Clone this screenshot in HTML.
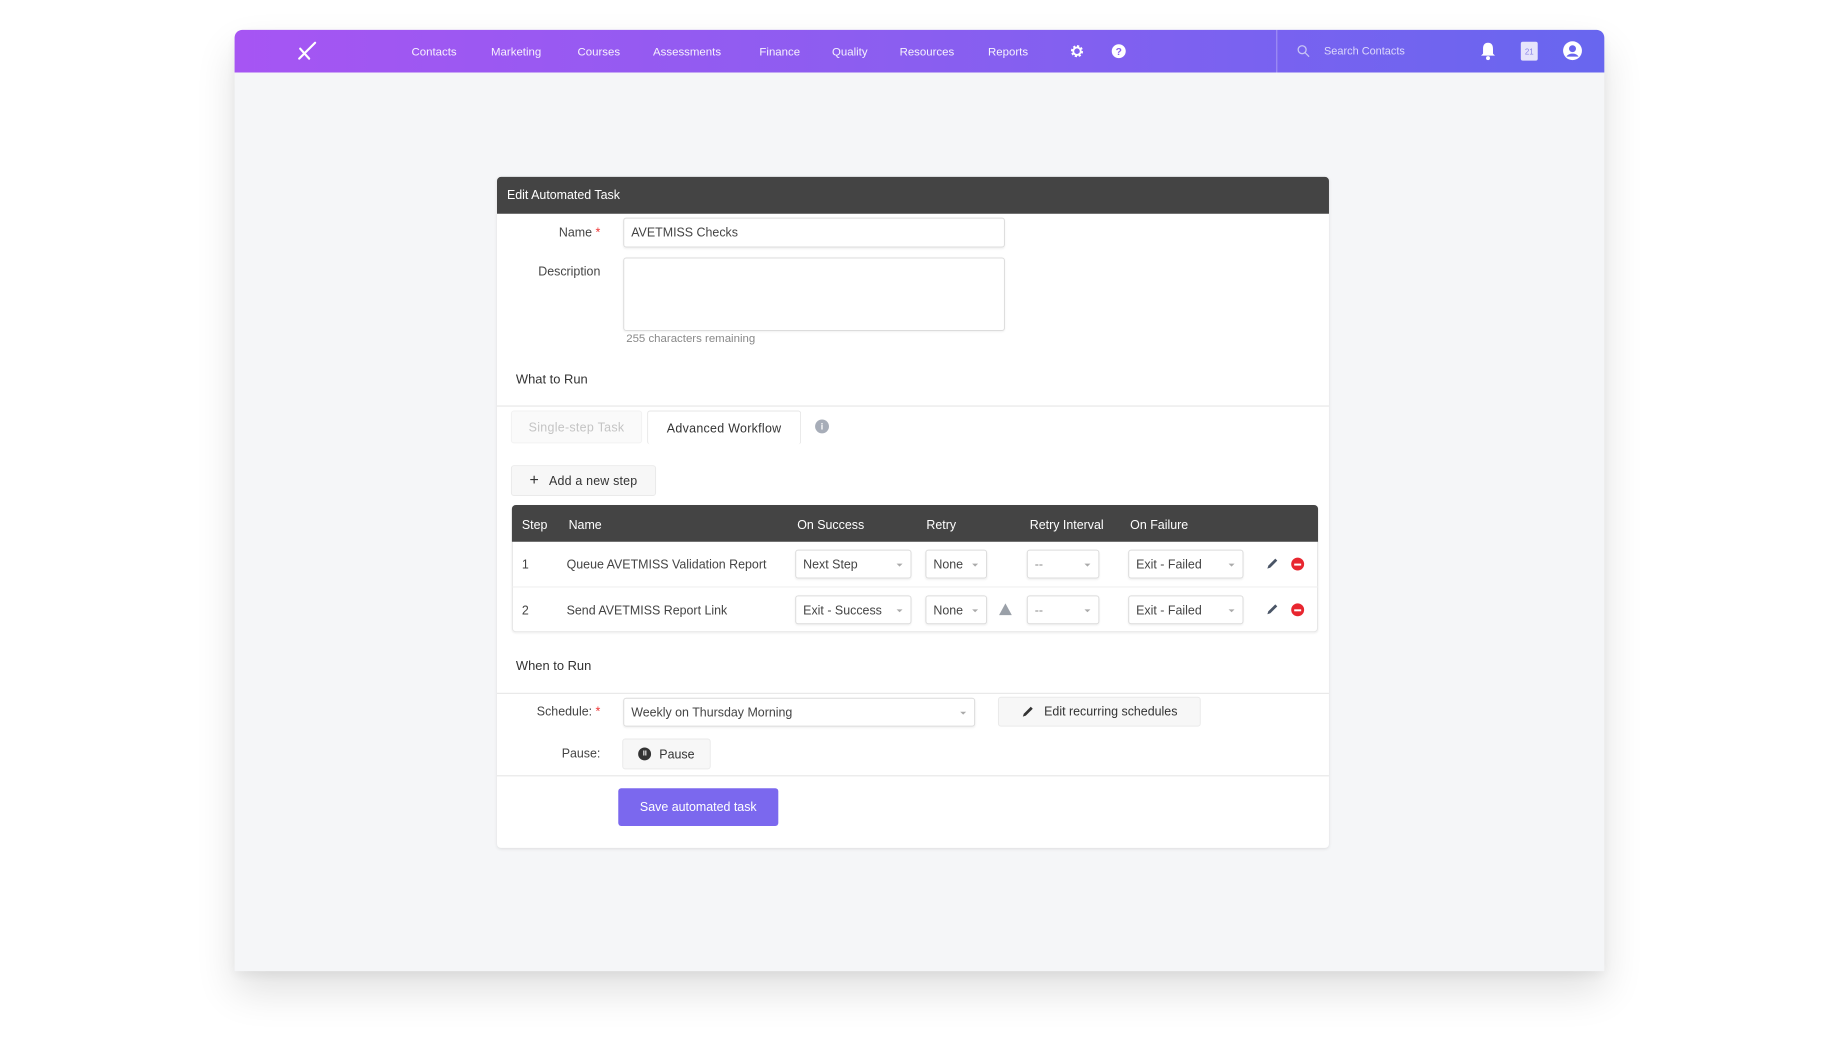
<!DOCTYPE html>
<html><head><meta charset="utf-8"><style>
*{box-sizing:border-box;margin:0;padding:0}
body{width:1840px;height:1050px;background:#fff;font-family:"Liberation Sans",sans-serif;position:relative;overflow:hidden;color:#333}
#w{position:absolute;left:0;top:0;width:1840px;height:1050px;transform:scale(0.994);transform-origin:0 0}
.abs{position:absolute}
#app{left:236px;top:30px;width:1378px;height:947px;background:#f5f6f8;border-radius:8px 8px 0 0;box-shadow:0 20px 40px rgba(0,0,0,.12),0 4px 12px rgba(0,0,0,.06)}
#nav{left:236px;top:30px;width:1378px;height:43px;background:linear-gradient(90deg,#a655f3,#8a5ef0 50%,#6866ef);border-radius:8px 8px 0 0}
.ni{position:absolute;top:47px;font-size:11.5px;color:#fff;opacity:.92}
.card{left:500px;top:178px;width:837px;height:675px;background:#fff;border-radius:4px;box-shadow:0 1px 3px rgba(0,0,0,.1)}
.hdr{left:500px;top:178px;width:837px;height:37px;background:#444;color:#fff;font-size:12.5px;padding:11px 10px;border-radius:4px 4px 0 0}
.lbl{position:absolute;font-size:12.5px;color:#444;text-align:right}
.inp{position:absolute;background:#fff;border:1px solid #dcdcdc;border-radius:3px;box-shadow:0 1px 2px rgba(0,0,0,.06);font-size:12.5px;color:#444;padding:0 7px;display:flex;align-items:center}
.sel::after{content:"";position:absolute;right:8px;top:50%;margin-top:-1px;border:3px solid transparent;border-top:3px solid #aaa}
.hr{position:absolute;left:500px;width:837px;height:1px;background:#e4e4e4}
.btn{position:absolute;background:#f7f7f7;border:1px solid #eaeaea;border-radius:3px;font-size:12.5px;color:#333;display:flex;align-items:center;justify-content:center}
.th{position:absolute;top:521px;font-size:12.5px;color:#fff}
.td{position:absolute;font-size:12.5px;color:#444}
</style></head><body><div id="w">
<div id="app" class="abs"></div>
<div id="nav" class="abs"></div>
<div class="abs" style="left:1284px;top:30px;width:1px;height:43px;background:rgba(255,255,255,.35)"></div>
<svg class="abs" style="left:298px;top:40px" width="22" height="22" viewBox="0 0 22 22"><path d="M3 19L19 3M4 9l9 10" stroke="#fff" stroke-width="2.2" fill="none" stroke-linecap="round"/></svg>
<div class="ni" style="left:414px">Contacts</div>
<div class="ni" style="left:494px">Marketing</div>
<div class="ni" style="left:581px">Courses</div>
<div class="ni" style="left:657px">Assessments</div>
<div class="ni" style="left:764px">Finance</div>
<div class="ni" style="left:837px">Quality</div>
<div class="ni" style="left:905px">Resources</div>
<div class="ni" style="left:994px">Reports</div>
<svg class="abs" style="left:1076px;top:44px" width="15" height="15" viewBox="0 0 16 16"><circle cx="8" cy="8" r="5" fill="none" stroke="#fff" stroke-width="3" stroke-dasharray="2.2 1.7"/><circle cx="8" cy="8" r="4" fill="none" stroke="#fff" stroke-width="2"/></svg>
<svg class="abs" style="left:1118px;top:44px" width="15" height="15" viewBox="0 0 16 16"><circle cx="8" cy="8" r="7.5" fill="#fff"/><text x="8" y="12" font-size="11" font-weight="bold" text-anchor="middle" fill="#8a5ef0" font-family="Liberation Sans">?</text></svg>
<svg class="abs" style="left:1305px;top:45px" width="13" height="13" viewBox="0 0 13 13"><circle cx="5" cy="5" r="4" fill="none" stroke="#c8c4f5" stroke-width="1.3"/><path d="M8 8l4 4" stroke="#c8c4f5" stroke-width="1.3"/></svg>
<div class="ni" style="left:1332px;top:46px;font-size:11px;opacity:.75">Search Contacts</div>
<svg class="abs" style="left:1488px;top:41px" width="18" height="20" viewBox="0 0 18 20"><path d="M9 2c-4 0-5 3-5 6v5l-2 2h14l-2-2V8c0-3-1-6-5-6z" fill="#fff"/><circle cx="9" cy="17.5" r="2" fill="#fff"/></svg>
<div class="abs" style="left:1530px;top:42px;width:17px;height:19px;background:#e6e4fb;border-radius:2px;font-size:8px;color:#8a84e8;text-align:center;padding-top:6px">21</div>
<svg class="abs" style="left:1572px;top:41px" width="20" height="20" viewBox="0 0 20 20"><circle cx="10" cy="10" r="9.5" fill="#fff"/><circle cx="10" cy="8" r="3.5" fill="#6a64ee"/><path d="M4 16c2-4 10-4 12 0" fill="#6a64ee"/></svg>

<div class="card abs"></div>
<div class="hdr abs">Edit Automated Task</div>
<div class="lbl" style="left:540px;top:227px;width:64px">Name <span style="color:#e33">*</span></div>
<div class="inp" style="left:627px;top:219px;width:384px;height:30px">AVETMISS Checks</div>
<div class="lbl" style="left:520px;top:266px;width:84px">Description</div>
<div class="inp" style="left:627px;top:259px;width:384px;height:74px"></div>
<div class="abs" style="left:630px;top:335px;font-size:11.5px;color:#888">255 characters remaining</div>
<div class="abs" style="left:519px;top:374px;font-size:13px;color:#333">What to Run</div>
<div class="hr" style="top:408px"></div>
<div class="btn" style="left:514px;top:413px;width:132px;height:33px;color:#c4c4c4;background:#fafafa;border-color:#f2f2f2;letter-spacing:.3px">Single-step Task</div>
<div class="btn" style="left:651px;top:413px;width:155px;height:34px;background:#fff;border-color:#e6e6e6;border-bottom:none;letter-spacing:.3px">Advanced Workflow</div>
<div class="abs" style="left:820px;top:422px;width:14px;height:14px;border-radius:50%;background:#a7adb8;color:#fff;font-size:9px;font-weight:bold;text-align:center;line-height:14px">i</div>
<div class="btn" style="left:514px;top:468px;width:146px;height:31px;letter-spacing:.2px"><span style="font-size:16px;margin-right:10px">+</span>Add a new step</div>

<div class="abs" style="left:515px;top:508px;width:811px;height:128px;background:#fff;border:1px solid #e6e6e6;border-radius:4px;box-shadow:0 1px 2px rgba(0,0,0,.06)"></div>
<div class="abs" style="left:515px;top:508px;width:811px;height:37px;background:#444;border-radius:4px 4px 0 0"></div>
<div class="th" style="left:525px">Step</div>
<div class="th" style="left:572px">Name</div>
<div class="th" style="left:802px">On Success</div>
<div class="th" style="left:932px">Retry</div>
<div class="th" style="left:1036px">Retry Interval</div>
<div class="th" style="left:1137px">On Failure</div>
<div class="abs" style="left:515px;top:590px;width:811px;height:1px;background:#eee"></div>

<div class="td" style="left:525px;top:561px">1</div>
<div class="td" style="left:570px;top:561px">Queue AVETMISS Validation Report</div>
<div class="inp sel" style="left:800px;top:553px;width:117px;height:29px">Next Step</div>
<div class="inp sel" style="left:931px;top:553px;width:62px;height:29px">None</div>
<div class="inp sel" style="left:1033px;top:553px;width:73px;height:29px;color:#888">--</div>
<div class="inp sel" style="left:1135px;top:553px;width:116px;height:29px">Exit - Failed</div>
<div class="td" style="left:525px;top:607px">2</div>
<div class="td" style="left:570px;top:607px">Send AVETMISS Report Link</div>
<div class="inp sel" style="left:800px;top:599px;width:117px;height:29px">Exit - Success</div>
<div class="inp sel" style="left:931px;top:599px;width:62px;height:29px">None</div>
<svg class="abs" style="left:1005px;top:607px" width="13" height="12" viewBox="0 0 13 12"><path d="M6.5 0L13 12H0z" fill="#9aa0a8"/></svg>
<div class="inp sel" style="left:1033px;top:599px;width:73px;height:29px;color:#888">--</div>
<div class="inp sel" style="left:1135px;top:599px;width:116px;height:29px">Exit - Failed</div>
<svg class="abs" style="left:1273px;top:560px" width="14" height="14" viewBox="0 0 14 14"><path d="M2 12l1-3 7-7 2 2-7 7z" fill="#4a5566"/></svg>
<div class="abs" style="left:1299px;top:561px;width:13px;height:13px;border-radius:50%;background:#e8262f"><div style="margin:5.5px 3px;height:2px;background:#fff"></div></div>
<svg class="abs" style="left:1273px;top:606px" width="14" height="14" viewBox="0 0 14 14"><path d="M2 12l1-3 7-7 2 2-7 7z" fill="#4a5566"/></svg>
<div class="abs" style="left:1299px;top:607px;width:13px;height:13px;border-radius:50%;background:#e8262f"><div style="margin:5.5px 3px;height:2px;background:#fff"></div></div>

<div class="abs" style="left:519px;top:662px;font-size:13px;color:#333">When to Run</div>
<div class="hr" style="top:697px"></div>
<div class="lbl" style="left:520px;top:709px;width:84px">Schedule: <span style="color:#e33">*</span></div>
<div class="inp sel" style="left:627px;top:702px;width:354px;height:29px">Weekly on Thursday Morning</div>
<div class="btn" style="left:1004px;top:701px;width:204px;height:30px"><svg width="14" height="14" viewBox="0 0 14 14" style="margin-right:9px"><path d="M2 12l1-3 7-7 2 2-7 7z" fill="#333"/></svg>Edit recurring schedules</div>
<div class="lbl" style="left:540px;top:751px;width:64px">Pause:</div>
<div class="btn" style="left:626px;top:743px;width:89px;height:31px"><span style="width:13px;height:13px;border-radius:50%;background:#333;color:#fff;font-size:7px;line-height:13px;text-align:center;margin-right:8px;font-weight:bold">II</span>Pause</div>
<div class="hr" style="top:780px"></div>
<div class="abs" style="left:622px;top:793px;width:161px;height:38px;background:#7b68ee;border-radius:3px;color:#fff;font-size:12.5px;text-align:center;line-height:38px">Save automated task</div>
</div></body></html>
